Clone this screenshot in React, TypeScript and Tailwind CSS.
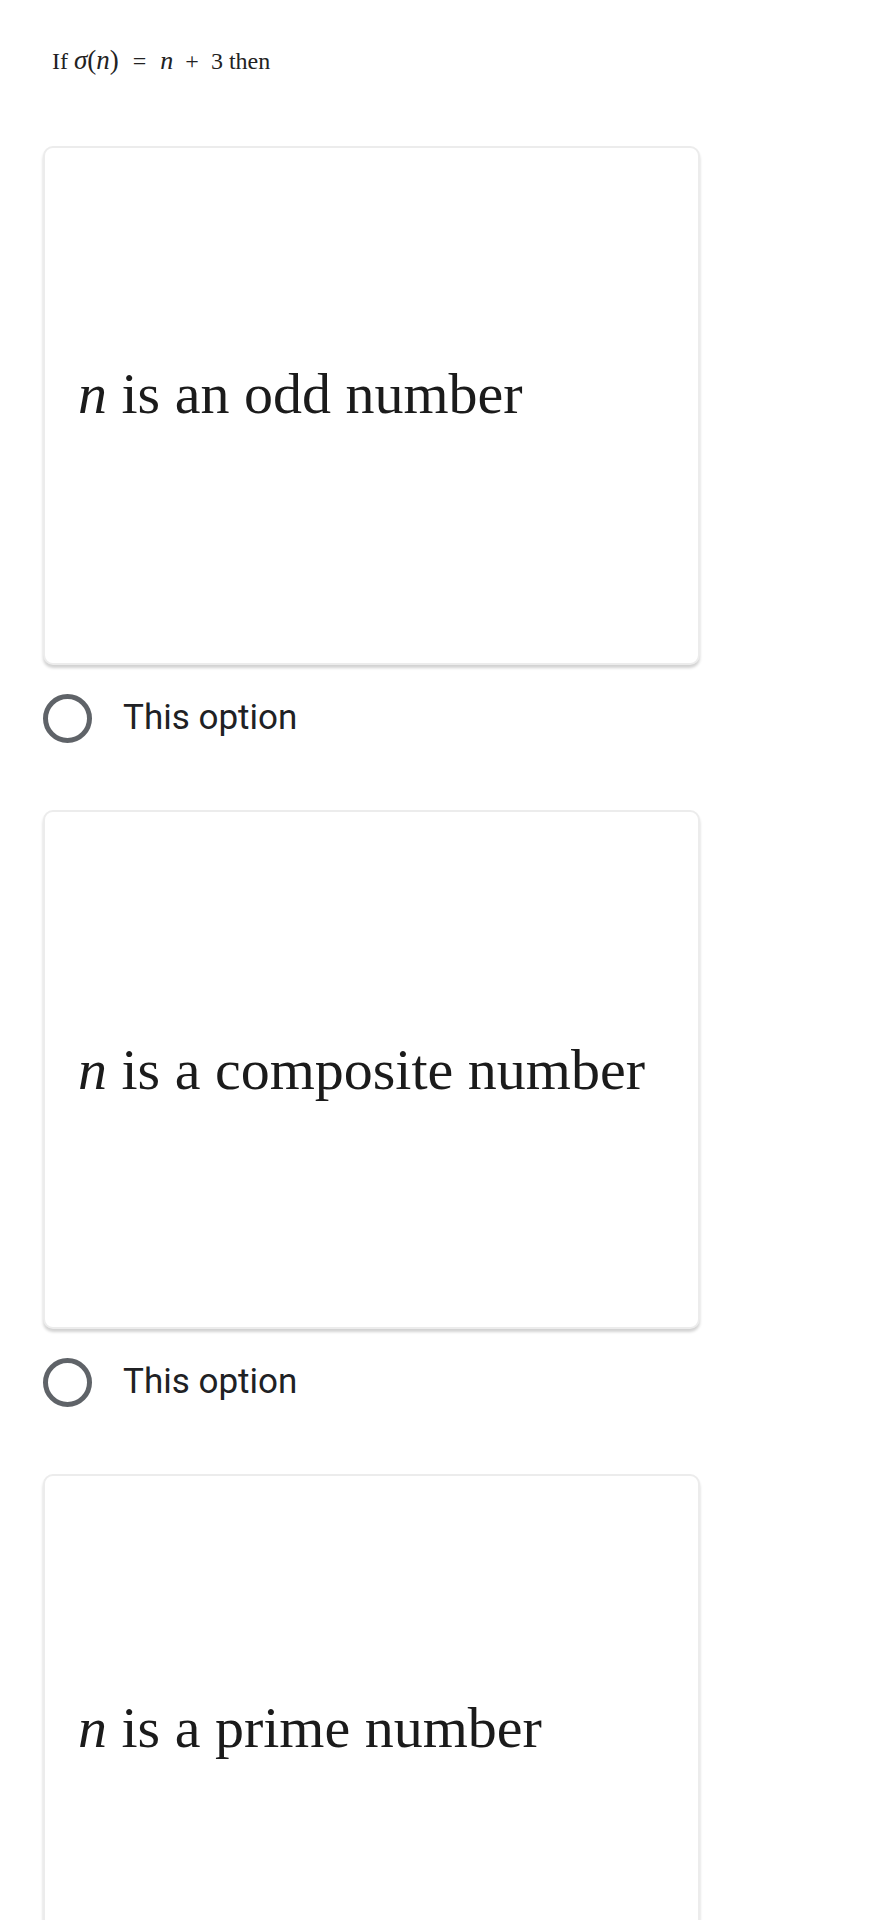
import React from 'react';

const options = [
  { id: 'odd', rest: 'is an odd number', lift: 'pb-[24px]' },
  { id: 'composite', rest: 'is a composite number', lift: 'pb-0' },
  { id: 'prime', rest: 'is a prime number', lift: 'pb-[12px]' },
];

function OptionCard({ rest, lift }: { rest: string; lift: string }) {
  return (
    <div
      className={
        'h-[519px] w-[657px] bg-white border-2 border-[#ececec] rounded-[10px] shadow-[0_3px_3px_rgba(0,0,0,0.18)] flex items-center pl-[33px] ' +
        lift
      }
    >
      <p className="text-[58px] leading-none text-[#1b1b1b] font-['Liberation_Serif',serif]">
        <i>n</i> {rest}
      </p>
    </div>
  );
}

function RadioRow() {
  return (
    <div className="flex items-center h-[49px] mt-[29px] mb-[67px]">
      <span className="w-[49px] h-[49px] rounded-full border-[5px] border-[#5f6368] shrink-0" />
      <span className="ml-[31px] text-[35px] text-[#202124] font-['Roboto',sans-serif]">This option</span>
    </div>
  );
}

export default function App() {
  return (
    <div className="min-h-screen bg-white px-[43px] pt-[44px]">
      <p className="pl-[9px] text-[24px] leading-[32px] text-[#222] font-['Liberation_Serif',serif] mb-[69px] flex items-baseline">
        <span>If&nbsp;</span>
        <span className="text-[27px]">
          <i>σ</i>(<i>n</i>)
        </span>
        <span className="inline-block w-[14px]" />
        <span>=</span>
        <span className="inline-block w-[14px]" />
        <i className="text-[26px]">n</i>
        <span className="inline-block w-[12px]" />
        <span>+</span>
        <span className="inline-block w-[12px]" />
        <span>3 then</span>
      </p>
      {options.map(o => (
        <div key={o.id}>
          <OptionCard rest={o.rest} lift={o.lift} />
          <RadioRow />
        </div>
      ))}
    </div>
  );
}
